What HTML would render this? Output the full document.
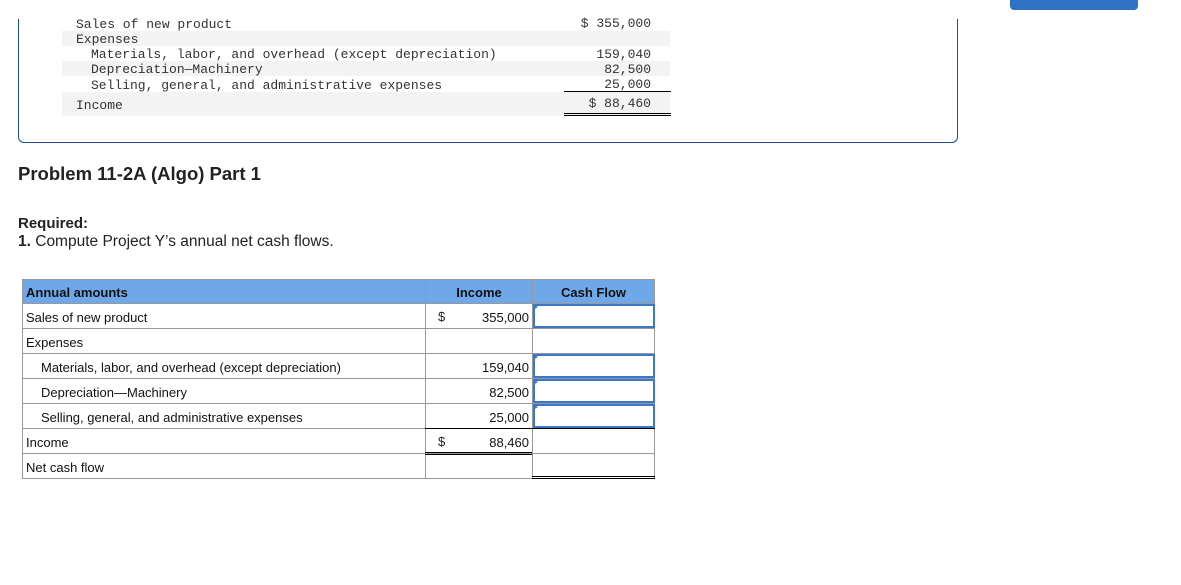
<!DOCTYPE html>
<html><head><meta charset="utf-8"><style>
*{margin:0;padding:0;box-sizing:border-box}
body{width:1181px;height:585px;background:#fff;position:relative;overflow:hidden;font-family:"Liberation Sans",sans-serif;color:#222}
.a{position:absolute}
.mono{font-family:"Liberation Mono",monospace;font-size:13px;color:#333;line-height:15px}
.band{position:absolute;left:62px;width:608px;background:#f3f3f3}
.cell{position:absolute;border:1px solid #999;font-size:13px;line-height:27px;color:#111}
.r{text-align:right;padding-right:3px}
.inp{position:absolute;border:2px solid #3b78c9;background:#fff}
.tri{position:absolute;width:0;height:0;border-top:3px solid transparent;border-bottom:3px solid transparent;border-left:5px solid #3b78c9}
</style></head><body>
<div class="a" style="left:1010px;top:-6px;width:128px;height:16px;background:#2f72c4;border-radius:4px"></div>
<div class="a" style="left:18px;top:19px;width:940px;height:124px;border:1.5px solid #1e4f91;border-top:none;border-radius:0 0 6px 6px"></div>
<div class="band" style="top:31px;height:15px"></div>
<div class="band" style="top:61px;height:15px"></div>
<div class="band" style="top:92px;height:24px"></div>
<div class="a mono" style="left:76px;top:17px">Sales of new product</div>
<div class="a mono" style="left:76px;top:32px">Expenses</div>
<div class="a mono" style="left:91px;top:47px">Materials, labor, and overhead (except depreciation)</div>
<div class="a mono" style="left:91px;top:62px">Depreciation—Machinery</div>
<div class="a mono" style="left:91px;top:78px">Selling, general, and administrative expenses</div>
<div class="a mono" style="left:76px;top:98px">Income</div>
<div class="a mono" style="left:540px;width:111px;text-align:right;top:16px">$ 355,000</div>
<div class="a mono" style="left:540px;width:111px;text-align:right;top:47px">159,040</div>
<div class="a mono" style="left:540px;width:111px;text-align:right;top:62px">82,500</div>
<div class="a mono" style="left:540px;width:111px;text-align:right;top:77px">25,000</div>
<div class="a mono" style="left:540px;width:111px;text-align:right;top:96px">$ 88,460</div>
<div class="a" style="left:564px;top:91px;width:107px;border-top:1px solid #000"></div>
<div class="a" style="left:564px;top:113px;width:107px;height:3px;border-top:1px solid #000;border-bottom:1px solid #000"></div>

<div class="a" style="left:18px;top:163px;font-size:18.5px;font-weight:bold;color:#222">Problem 11-2A (Algo) Part 1</div>
<div class="a" style="left:18px;top:215px;font-size:15px;font-weight:bold;color:#222">Required:</div>
<div class="a" style="left:18px;top:233px;font-size:15.5px;color:#222"><b>1.</b> Compute Project Y’s annual net cash flows.</div>

<div class="a" style="left:22px;top:279px;width:633px;height:25px;background:#6fa8e8;border:1px solid #999"></div>
<div class="cell" style="left:22px;top:279px;width:404px;height:25px;font-weight:bold;padding-left:3px;line-height:25px">Annual amounts</div>
<div class="cell" style="left:425px;top:279px;width:108px;height:25px;font-weight:bold;text-align:center;line-height:25px">Income</div>
<div class="cell" style="left:532px;top:279px;width:123px;height:25px;font-weight:bold;text-align:center;line-height:25px">Cash Flow</div>

<div class="cell" style="left:22px;top:303px;width:404px;height:26px;padding-left:3px">Sales of new product</div>
<div class="cell" style="left:22px;top:328px;width:404px;height:26px;padding-left:3px">Expenses</div>
<div class="cell" style="left:22px;top:353px;width:404px;height:26px;padding-left:18px">Materials, labor, and overhead (except depreciation)</div>
<div class="cell" style="left:22px;top:378px;width:404px;height:26px;padding-left:18px">Depreciation—Machinery</div>
<div class="cell" style="left:22px;top:403px;width:404px;height:26px;padding-left:18px">Selling, general, and administrative expenses</div>
<div class="cell" style="left:22px;top:428px;width:404px;height:26px;padding-left:3px">Income</div>
<div class="cell" style="left:22px;top:453px;width:404px;height:26px;padding-left:3px">Net cash flow</div>

<div class="cell r" style="left:425px;top:303px;width:108px;height:26px">355,000</div>
<div class="cell" style="left:425px;top:328px;width:108px;height:26px"></div>
<div class="cell r" style="left:425px;top:353px;width:108px;height:26px">159,040</div>
<div class="cell r" style="left:425px;top:378px;width:108px;height:26px">82,500</div>
<div class="cell r" style="left:425px;top:403px;width:108px;height:26px">25,000</div>
<div class="cell r" style="left:425px;top:428px;width:108px;height:26px">88,460</div>
<div class="cell" style="left:425px;top:453px;width:108px;height:26px"></div>
<div class="a" style="left:438px;top:309px;font-size:13px">$</div>
<div class="a" style="left:438px;top:434px;font-size:13px">$</div>
<div class="a" style="left:425px;top:428px;width:108px;border-top:1px solid #000"></div>
<div class="a" style="left:425px;top:452px;width:108px;height:3px;border-top:1px solid #000;border-bottom:1px solid #000"></div>

<div class="cell" style="left:532px;top:303px;width:123px;height:26px"></div>
<div class="cell" style="left:532px;top:328px;width:123px;height:26px"></div>
<div class="cell" style="left:532px;top:353px;width:123px;height:26px"></div>
<div class="cell" style="left:532px;top:378px;width:123px;height:26px"></div>
<div class="cell" style="left:532px;top:403px;width:123px;height:26px"></div>
<div class="cell" style="left:532px;top:428px;width:123px;height:26px"></div>
<div class="cell" style="left:532px;top:453px;width:123px;height:26px"></div>
<div class="inp" style="left:533px;top:304px;width:122px;height:24px"></div>
<div class="inp" style="left:533px;top:354px;width:122px;height:24px"></div>
<div class="inp" style="left:533px;top:379px;width:122px;height:24px"></div>
<div class="inp" style="left:533px;top:404px;width:122px;height:24px"></div>
<div class="tri" style="left:533px;top:304px"></div>
<div class="tri" style="left:533px;top:354px"></div>
<div class="tri" style="left:533px;top:379px"></div>
<div class="tri" style="left:533px;top:404px"></div>
<div class="a" style="left:532px;top:428px;width:123px;border-top:1px solid #000"></div>
<div class="a" style="left:532px;top:476px;width:123px;height:3px;border-top:1px solid #000;border-bottom:1px solid #000"></div>
</body></html>
